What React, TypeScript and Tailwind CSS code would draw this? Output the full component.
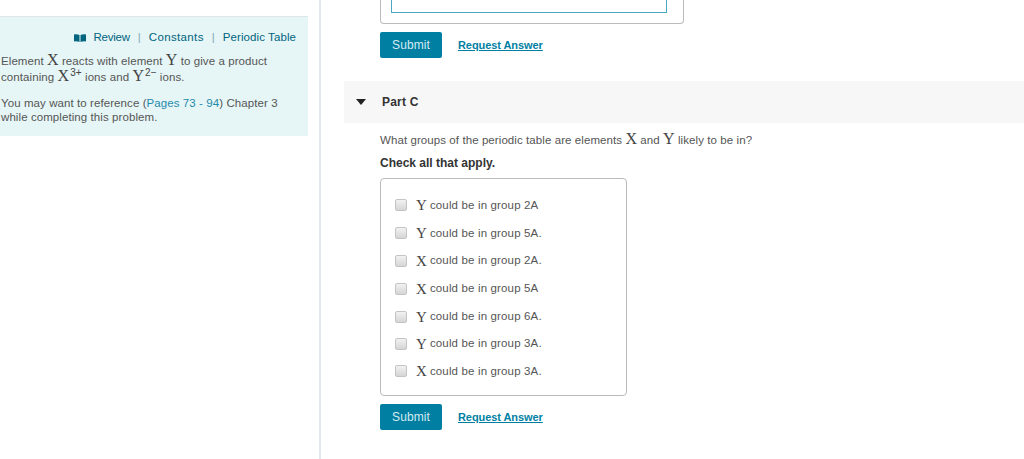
import React from 'react';

const sans = "font-['Liberation_Sans',Arial,sans-serif]";

function V({ children }: { children: React.ReactNode }) {
  return <span className="font-['Liberation_Serif',serif] text-[16px] leading-[0] text-[#444]">{children}</span>;
}

function Sup({ children }: { children: React.ReactNode }) {
  return <span className="relative top-[-5px] ml-[1px] text-[10px] leading-[0] text-[#444]">{children}</span>;
}

function SubmitRow() {
  return (
    <div className="flex items-center">
      <button className="w-[62px] h-[26px] rounded-[2px] bg-[#007fa3] text-[12px] text-[#d5ebf2]">Submit</button>
      <a className="ml-[16px] text-[11px] font-bold tracking-[-0.07px] text-[#007fa3] underline">Request Answer</a>
    </div>
  );
}

const options = [
  { v: 'Y', text: 'could be in group 2A', h: 28 },
  { v: 'Y', text: 'could be in group 5A.', h: 28 },
  { v: 'X', text: 'could be in group 2A.', h: 27 },
  { v: 'X', text: 'could be in group 5A', h: 29 },
  { v: 'Y', text: 'could be in group 6A.', h: 27 },
  { v: 'Y', text: 'could be in group 3A.', h: 27 },
  { v: 'X', text: 'could be in group 3A.', h: 28 },
];

export default function App() {
  return (
    <div className={`${sans} flex w-[1024px] h-[459px] overflow-hidden bg-white text-[11.5px] tracking-[0.08px] text-[#555]`}>
      {/* Left column */}
      <div className="w-[321px] shrink-0 border-r-2 border-[#e3e8f0] pt-[16px]">
        <div className="w-[308px] h-[120px] bg-[#e6f5f6] border-t border-[#dfe6ea] pt-[14px]">
          <div className="flex items-center justify-end h-[14px] pr-[12px] text-[#00657f]">
            <svg width="12" height="8" viewBox="0 0 12 8" className="mr-[8px]">
              <path d="M0 .5Q3 0 5.5 1V8Q3 7 0 7.5zM12 .5Q9 0 6.5 1V8Q9 7 12 7.5z" fill="#00657f" />
            </svg>
            <span className="tracking-[-0.25px]">Review</span>
            <span className="mx-[8px] text-[#7fa9b5]">|</span>
            <span className="tracking-[0.35px]">Constants</span>
            <span className="mx-[8px] text-[#7fa9b5]">|</span>
            <span>Periodic Table</span>
          </div>
          <p className="pl-[1px] mt-[8px] leading-[16px]">
            Element <V>X</V> reacts with element <V>Y</V> to give a product
            <br />
            containing <V>X</V>
            <Sup>3+</Sup> ions and <V>Y</V>
            <Sup>2−</Sup> ions.
          </p>
          <p className="pl-[1px] mt-[11px] leading-[14px]">
            You may want to reference (<span className="text-[#1f8bab]">Pages 73 - 94</span>) Chapter 3
            <br />
            while completing this problem.
          </p>
        </div>
      </div>

      {/* Right column */}
      <div className="flex-1 min-w-0 pl-[23px]">
        <div className="pl-[36px]">
          <div className="w-[304px] h-[24px] border-x border-b border-[#bbb] rounded-b-[4px] pl-[10px]">
            <div className="w-[276px] h-[13px] border-x border-b border-[#4ba6c2]" />
          </div>
          <div className="mt-[8px]">
            <SubmitRow />
          </div>
        </div>

        <div className="mt-[23px] h-[42px] bg-[#f7f7f7] flex items-center">
          <svg width="10" height="6" viewBox="0 0 10 6" className="ml-[12px]">
            <path d="M0 0h10L5 6z" fill="#222" />
          </svg>
          <span className="ml-[16px] text-[12px] font-bold tracking-[0.2px] text-[#333]">Part C</span>
        </div>

        <div className="pl-[36px]">
          <p className="mt-[7px] h-[20px] leading-[20px]">
            What groups of the periodic table are elements <V>X</V> and <V>Y</V> likely to be in?
          </p>
          <p className="mt-[5px] h-[16px] leading-[16px] text-[12px] font-bold tracking-[0] text-[#333]">Check all that apply.</p>
          <div className="mt-[7px] w-[247px] h-[218px] border border-[#bbb] rounded-[4px] pt-[12px] pl-[14px]">
            {options.map((o, i) => (
              <div key={i} style={{ height: o.h }} className="flex items-center">
                <span className="w-[12px] h-[12px] rounded-[2px] border border-[#c4c4c4] bg-gradient-to-b from-[#f2f2f2] to-[#d5d5d5]" />
                <span className="ml-[9px] pt-[1px] font-['Liberation_Serif',serif] text-[15px] text-[#444]">{o.v}</span>
                <span className="ml-[3px] pt-[1px] tracking-[0.15px]">{o.text}</span>
              </div>
            ))}
          </div>
          <div className="mt-[8px]">
            <SubmitRow />
          </div>
        </div>
      </div>
    </div>
  );
}
